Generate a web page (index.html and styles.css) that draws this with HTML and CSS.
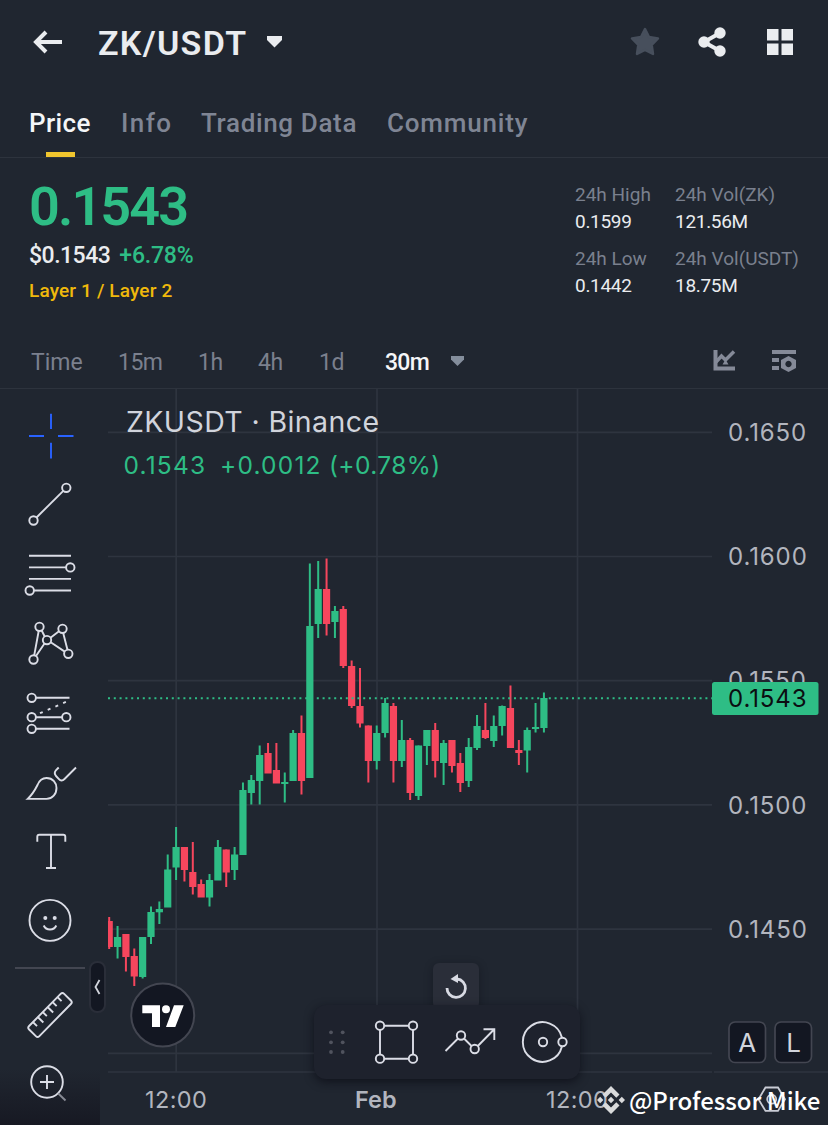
FILE: index.html
```html
<!DOCTYPE html>
<html lang="en">
<head>
  <meta charset="UTF-8">
  <title>ZK/USDT</title>
  <link rel="stylesheet" href="styles.css">
</head>
<body>
  <header class="header">
    <svg class="back" width="30" height="24" viewBox="0 0 30 24"><path d="M13 2 3 12l10 10M3 12h26" fill="none" stroke="#eaecef" stroke-width="4"/></svg>
    <h1>ZK/USDT</h1>
    <svg class="caret" width="16" height="12" viewBox="0 0 16 12"><path d="M0 0h15v4L7.500 11.500 0 4z" fill="#eaecef"/></svg>
    <div class="header-icons">
      <svg width="30" height="30" viewBox="0 0 30 30"><path d="m15 2 4 8 9 1.400-6.300 6.500 1.300 9.100-8-4-8 4 1.300-9.100L2 11.400l9-1.400z" fill="#474f5c" stroke="#474f5c" stroke-width="2.500" stroke-linejoin="round"/></svg>
      <svg class="share" width="30" height="30" viewBox="0 0 30 30" fill="#eaecef"><path d="M23 6 7 15l16 9" fill="none" stroke="#eaecef" stroke-width="4"/><circle cx="23" cy="6" r="5.700"/><circle cx="7" cy="15" r="5.700"/><circle cx="23" cy="24" r="5.700"/></svg>
      <svg width="26" height="26" viewBox="0 0 26 26" fill="#eaecef"><path d="M0 0h11.500v11.500H0zM14.500 0H26v11.500H14.500zM0 14.500h11.500V26H0zM14.500 14.500H26V26H14.500z"/></svg>
    </div>
  </header>

  <nav class="tabs">
    <span class="tab active">Price</span>
    <span class="tab info">Info</span>
    <span class="tab trading">Trading Data</span>
    <span class="tab community">Community</span>
  </nav>

  <section class="summary">
    <div class="price-box">
      <div class="price">0.1543</div>
      <div class="sub-price"><span class="usd">$0.1543</span><span class="change">+6.78%</span></div>
      <div class="layer">Layer 1 / Layer 2</div>
    </div>
    <div class="stats">
      <div class="stat"><label>24h High</label><b>0.1599</b></div>
      <div class="stat"><label>24h Vol(ZK)</label><b>121.56M</b></div>
      <div class="stat"><label>24h Low</label><b>0.1442</b></div>
      <div class="stat"><label>24h Vol(USDT)</label><b>18.75M</b></div>
    </div>
  </section>

  <div class="intervals">
    <span class="w-time">Time</span>
    <span class="w-15">15m</span>
    <span class="w-1h">1h</span>
    <span class="w-4h">4h</span>
    <span class="w-1d">1d</span>
    <span class="w-30 selected">30m</span>
    <svg class="interval-caret" width="14" height="10" viewBox="0 0 14 10"><path d="M0 0h13v3.500L6.500 10 0 3.500z" fill="#848e9c"/></svg>
    <div class="interval-icons">
      <svg width="24" height="24" viewBox="0 0 24 24" fill="none" stroke="#858a98" stroke-width="4"><path d="M3.500 1v18.500H23"/><path d="m4 13 5.500-6 4 4L22 2.500" stroke-width="3.500"/><path d="m13.500 10.500 3 5h-6z" fill="#858a98" stroke="none"/></svg>
      <svg width="26" height="24" viewBox="0 0 26 24" fill="#858a98"><path d="M1 1h24v4H1zM1 9h7v4H1zM1 17h7v4H1z"/><path fill-rule="evenodd" d="m17.500 7 7.500 4v8l-7.500 4-7.500-4v-8zm0 4.800a3.200 3.200 0 1 0 .01 0z"/></svg>
    </div>
  </div>

  <main class="chart">
    <aside class="tools">
      <svg class="tool cross" viewBox="-26 -26 52 52"><path d="M1-22.300V-7M1 6.700v15.700M-21 0h15M8 0h15.500"/></svg>
      <svg class="tool" viewBox="-26 -26 52 52"><path d="m-13.500 12.500 26.800-26.700"/><circle cx="-16.500" cy="15.500" r="4.200"/><circle cx="16.300" cy="-17.200" r="4.200"/></svg>
      <svg class="tool" viewBox="-26 -26 52 52"><path d="M-21-19.300h42M-21-7.600h37M-21 3.900h42M-16 15.500h37"/><circle cx="20.300" cy="-7.600" r="4.200"/><circle cx="-20.300" cy="15.500" r="4.200"/></svg>
      <svg class="tool" viewBox="-26 -26 52 52"><path d="m-11.300-13-4.500 24.300M-8.300-13.500l3 6M-5.500-.5-14 12M.5-6.300 9-12.800M13.200-11l4.200 16.600M.7-1.700l14 9.300"/><circle cx="-10.500" cy="-17.200" r="4.200"/><circle cx="12.500" cy="-15.200" r="4.200"/><circle cx="-3" cy="-3.900" r="4.200"/><circle cx="-16.500" cy="15.500" r="4.200"/><circle cx="18.300" cy="9.800" r="4.200"/></svg>
      <svg class="tool" viewBox="-26 -26 52 52"><path d="M-14-15.200h33.500M-14 4.200h26M-14 15.800h33.500"/><path d="M-10 .200 16.500-11.300" stroke-dasharray="3 5.400"/><circle cx="-18.300" cy="-15.200" r="4.200"/><circle cx="-18.300" cy="4.200" r="4.200"/><circle cx="16.300" cy="4.200" r="4.200"/><circle cx="-18.300" cy="15.800" r="4.200"/></svg>
      <svg class="tool" viewBox="-26 -26 52 52"><path d="M-22.300 15.900C-17 11-14.500 6-12.500 2-10.500-3-7-5-3.500-5 3-5 6.500 0 6.500 5c0 6-4 10.900-10 10.900zM8.700-15.500l-2.600 2.700Q3.500-10 6-7l2.700 2.800Q11.500-1 14.500-4L26-15.500"/></svg>
      <svg class="tool" viewBox="-26 -26 52 52"><path d="M-12.700-10.300v-5q0-2 2-2h24q2 0 2 2v5M1-17.300V16M-4 16H6"/></svg>
      <svg class="tool" viewBox="-26 -26 52 52"><circle cx="0" cy="-.6" r="20.500"/><g class="fill"><circle cx="-4.700" cy="-2.900" r="2"/><circle cx="4.700" cy="-2.900" r="2"/></g><path d="M-6.300 4.500Q-4.500 8.500 0 8.500t6.300-4"/></svg>
      <hr>
      <svg class="tool" viewBox="-26 -26 52 52"><g transform="rotate(-45.500)"><rect x="-25" y="-7.200" width="50" height="14.400" rx="2.500"/><path d="M-17-7v5.500M-10-7v7.500M-3-7v5.500M4-7v7.500M11-7v5.500M18-7v5.500"/></g></svg>
      <svg class="tool" viewBox="-26 -26 52 52"><circle cx="-3" cy="-3" r="15.800"/><path d="M-10-3H4M-3-10v14"/><path d="m8.300 8.500 7.200 7" stroke="#878a94"/></svg>
    </aside>

    <svg class="plot" width="728" height="736" viewBox="100 389 728 736">
      <g id="grid"></g>
      <path class="axis" d="M108 1072h604M714 1072h114"/>
      <g id="candles"></g>
      <path class="last-line" d="M108 698.200h604"/>
      <g id="scale" class="label"></g>
      <rect x="712" y="682" width="106.500" height="33" rx="2.500" fill="#2ebd85"/>
      <text class="label now" x="728" y="707">0.1543</text>
      <g class="label">
        <text x="145" y="1108" class="t">12:00</text>
        <text x="355" y="1108" class="t feb">Feb</text>
        <text x="546" y="1108" class="t">12:00</text>
      </g>
      <text class="symbol" x="126" y="432">ZKUSDT · Binance</text>
      <text class="quote" x="123.500" y="474">0.1543</text>
      <text class="quote" x="220" y="474">+0.0012</text>
      <text class="quote" x="329" y="474">(+0.78%)</text>

      <g class="tv">
        <circle cx="162.700" cy="1015" r="31.500" fill="#131722" stroke="#434651" stroke-width="2"/>
        <g fill="#fff"><path d="M142.300 1005.300H160V1027h-8v-13.700h-9.700zM174 1005.300h9.700l-8.400 21.700H166z"/><circle cx="166" cy="1009.300" r="4"/></g>
      </g>
      <g class="scale-button">
        <rect x="729" y="1022" width="36.500" height="40.500" rx="6"/>
        <rect x="775" y="1022" width="36.500" height="40.500" rx="6"/>
        <text x="747.200" y="1052">A</text>
        <text x="793.500" y="1052">L</text>
      </g>
      <g fill="none" stroke="#c9ccd5" stroke-width="1.800"><path d="M765.500 1087.500h12.500l7 11.700-7 11.700h-12.500l-7-11.700z"/><circle cx="771.700" cy="1099.200" r="4.500"/></g>
    </svg>

    <div class="collapse"><svg width="7" height="16" viewBox="0 0 7 16"><path d="M5.500 1 1.500 8l4 7" fill="none" stroke="#d1d4dc" stroke-width="1.800"/></svg></div>

    <div class="reset"><svg width="26" height="28" viewBox="-13 -15 26 28"><path d="M-9 0A9.200 9.200 0 1 0 1-9" fill="none" stroke="#d8dae3" stroke-width="2.800"/><path d="m-5.500-9 7.500-5v9z" fill="#d8dae3"/></svg></div>

    <div class="favorites">
      <svg width="266" height="74" viewBox="314 1005 266 74" fill="none" stroke="#dbdde6" stroke-width="1.900">
        <g fill="#50535e" stroke="none"><circle cx="331" cy="1032.300" r="1.900"/><circle cx="342.700" cy="1032.300" r="1.900"/><circle cx="331" cy="1042.300" r="1.900"/><circle cx="342.700" cy="1042.300" r="1.900"/><circle cx="331" cy="1052" r="1.900"/><circle cx="342.700" cy="1052" r="1.900"/></g>
        <path d="M384.300 1025.700h24.500M413 1030v24.500M408.800 1058.700h-24.500M380 1054.500V1030"/>
        <circle cx="380" cy="1025.700" r="4.200"/><circle cx="413" cy="1025.700" r="4.200"/><circle cx="413" cy="1058.700" r="4.200"/><circle cx="380" cy="1058.700" r="4.200"/>
        <path d="m445.500 1051 12.500-12.500M464 1038.500l7.500 7.500M477.800 1046l16.200-16.500M483.500 1029.300h10.800V1040"/>
        <circle cx="461" cy="1035.500" r="4.200"/><circle cx="474.700" cy="1049" r="4.200"/>
        <path d="M561.900 1037.500A19.800 19.800 0 1 0 561.900 1046.500"/><circle cx="543" cy="1042" r="4.200"/><circle cx="562.500" cy="1042" r="4.200"/>
      </svg>
    </div>

    <div class="author">
      <svg width="28" height="28" viewBox="-14 -14 28 28" fill="#d9dadb"><path d="m0-14 8.500 8.500-3.200 3.200L0-7.600l-5.300 5.300-3.200-3.200zM0 14l8.500-8.500-3.200-3.200L0 7.600l-5.300-5.300-3.200 3.200zM-14 0l3.200-3.200L-7.600 0l-3.200 3.200zM14 0l-3.200-3.200L7.600 0l3.200 3.200zM0-3.200 3.200 0 0 3.200-3.200 0z"/></svg>
      <span>@Professor Mike</span>
    </div>
  </main>

  <script>
    // [direction, wick top, wick bottom, body top, body bottom]
    const candles = [
      ['d', 917, 949, 921, 947], ['u', 926, 958.5, 937, 947], ['d', 934, 971.5, 934, 957],
      ['d', 948.5, 986, 956, 976.5], ['u', 937, 978.5, 937, 977], ['u', 906.5, 944, 912, 937],
      ['u', 901.5, 924, 909, 912.3], ['u', 854.5, 907, 869.5, 907.5], ['u', 827, 880, 847, 867.5],
      ['d', 847, 881.5, 847, 870], ['d', 842, 894.5, 872, 887], ['d', 879.5, 897, 884, 897.5],
      ['u', 874, 906.5, 880, 897.5], ['u', 840, 880, 847, 880.5], ['d', 849.5, 887, 849.5, 872.5],
      ['u', 847, 880, 854.5, 870], ['u', 782.5, 855, 790, 855], ['u', 775, 804.5, 780, 793],
      ['u', 745.5, 804.5, 755, 781], ['d', 743, 773, 753, 773.5], ['d', 743, 783, 770, 783.5],
      ['u', 772.5, 802.5, 782, 784], ['u', 730, 781, 733, 781], ['d', 715.5, 794.5, 733, 781],
      ['u', 563.5, 778, 626, 778], ['u', 561, 638, 589, 624], ['d', 558.5, 635.5, 589, 624],
      ['u', 606, 638, 611, 622], ['d', 606, 668, 609, 666], ['d', 660.5, 708, 666, 706],
      ['d', 668, 727.5, 706, 723.5], ['d', 725.5, 782.5, 725.5, 761], ['u', 725.5, 769.5, 733, 761],
      ['u', 698, 737.5, 703, 733], ['d', 703, 782.5, 706, 761], ['u', 720, 767, 740, 761],
      ['d', 738, 800, 740, 793], ['u', 745.5, 800, 745.5, 796], ['u', 730, 765, 730, 746],
      ['d', 723, 777.5, 730, 761], ['u', 740, 785, 743, 763], ['d', 740, 772.5, 740, 766],
      ['d', 753, 792, 763, 783], ['u', 738, 787, 747, 781], ['u', 715, 750, 726, 748],
      ['d', 703, 739, 730, 738], ['u', 715.5, 747, 726, 741], ['u', 705.5, 735.5, 706, 726],
      ['d', 685.5, 748, 708, 748], ['d', 740, 765, 750, 753], ['u', 727.5, 772.5, 730, 750.5],
      ['u', 703, 732.5, 727, 729], ['u', 692.5, 732.5, 698, 728]
    ];
    const colors = { u: '#2ebd85', d: '#f6465d' };

    let bars = '';
    candles.forEach(([dir, high, low, top, bottom], i) => {
      const x = 109.2 + i * 8.36;
      const left = Math.max(108, x - 3.6);
      bars += `<rect x="${x - 1}" y="${high}" width="2" height="${low - high}" fill="${colors[dir]}"/>`;
      bars += `<rect x="${left}" y="${top}" width="${x + 3.6 - left}" height="${bottom - top}" fill="${colors[dir]}"/>`;
    });
    document.getElementById('candles').innerHTML = bars;

    let grid = '<path d="M176.200 389v683M377 389v683M577.500 389v683"/>';
    let scale = '';
    ['0.1650', '0.1600', '0.1550', '0.1500', '0.1450', ''].forEach((price, i) => {
      const y = 432.3 + i * 124.2;
      grid += `<path d="M108 ${y}h604"/>`;
      scale += `<text x="728" y="${y + 8.7}">${price}</text>`;
    });
    document.getElementById('grid').innerHTML = grid;
    document.getElementById('scale').innerHTML = scale;
  </script>
</body>
</html>
```
FILE: styles.css
```css
* {
  margin: 0;
  padding: 0;
  box-sizing: border-box;
}

body {
  width: 828px;
  height: 1125px;
  overflow: hidden;
  font-family: Roboto, sans-serif;
  background-color: #202630;
  color: #eaecef;
}

.header {
  display: flex;
  align-items: center;
  height: 88px;
  padding: 0 35px 4px 33px;
}

h1 {
  width: 149px;
  margin: 2px 20px 0 35px;
  font-size: 34px;
  font-weight: 600;
  letter-spacing: 1.3px;
  white-space: nowrap;
}

.header-icons {
  display: flex;
  align-items: center;
  gap: 37px;
  margin-left: auto;
}

.share {
  margin-right: 3px;
}

.tabs {
  display: flex;
  height: 70px;
  padding-left: 29px;
  gap: 30px;
  border-bottom: 1px solid #2d333d;
  font-size: 26px;
  font-weight: 500;
  line-height: 70px;
  color: #7f8594;
  white-space: nowrap;
}

.tab.active {
  width: 62px;
  height: 69px;
  position: relative;
  letter-spacing: 0.4px;
  color: #f5f6f8;
}

.tab.active::after {
  content: "";
  position: absolute;
  left: 17px;
  bottom: 0;
  width: 29px;
  height: 5px;
  background-color: #f0c52e;
}

.info {
  width: 50px;
  letter-spacing: 1.4px;
}

.trading {
  width: 156px;
  letter-spacing: 0.65px;
}

.community {
  letter-spacing: 0.8px;
}

.summary {
  display: flex;
  justify-content: space-between;
  height: 177px;
  padding: 18px 29px 0;
}

.price {
  height: 60px;
  font-size: 54px;
  font-weight: 600;
  line-height: 61px;
  letter-spacing: -1.9px;
  color: #2ebd85;
}

.sub-price {
  display: flex;
  gap: 9px;
  height: 37px;
  font-size: 23px;
  font-weight: 500;
  line-height: 39px;
  letter-spacing: -0.5px;
}

.change {
  letter-spacing: -0.2px;
  color: #2ebd85;
}

.layer {
  font-size: 19px;
  font-weight: 500;
  line-height: 35px;
  letter-spacing: 0.15px;
  color: #f0b90b;
}

.stats {
  display: grid;
  grid-template-columns: 100px 124px;
  grid-auto-rows: 63.5px;
  padding-top: 5px;
}

.stat {
  display: flex;
  flex-direction: column;
  white-space: nowrap;
}

.stat label {
  font-size: 19px;
  line-height: 27px;
  color: #7a808e;
}

.stat b {
  font-size: 19px;
  font-weight: 400;
  line-height: 27px;
  letter-spacing: -0.3px;
}

.intervals {
  display: flex;
  align-items: center;
  height: 54px;
  padding: 2px 31px 0;
  border-bottom: 1px solid #2d333d;
  font-size: 23px;
  color: #7b808e;
}

.w-time { width: 87px; }
.w-15 { width: 80px; letter-spacing: -0.5px; }
.w-1h { width: 60px; letter-spacing: -0.5px; }
.w-4h { width: 61px; letter-spacing: -0.5px; }
.w-1d { width: 66px; letter-spacing: -0.5px; }
.w-30 { width: 66px; letter-spacing: -0.7px; }

.selected {
  font-weight: 500;
  color: #f5f6f8;
}

.interval-caret {
  margin-bottom: 4px;
}

.interval-icons {
  display: flex;
  gap: 35px;
  margin: 0 0 3px auto;
}

.chart {
  position: relative;
  display: flex;
  height: 736px;
}

.tools {
  display: flex;
  flex-direction: column;
  align-items: center;
  width: 100px;
  height: 736px;
  padding-top: 12.5px;
  background: linear-gradient(to bottom, transparent 680px, #171923 736px);
}

.tool {
  width: 52px;
  height: 52px;
  margin: 8.65px 0;
  flex: none;
  overflow: visible;
  fill: none;
  stroke: #dbdde6;
  stroke-width: 1.9;
}

.tool .fill {
  fill: #dbdde6;
  stroke: none;
}

.cross {
  stroke: #2962ff;
}

.tools hr {
  width: 70px;
  height: 2px;
  margin: 11.3px 0 11.8px;
  border: none;
  background-color: #434651;
}

.plot {
  flex: none;
  font-family: Inter, sans-serif;
}

#grid path, .axis {
  fill: none;
  stroke: #2e343f;
  stroke-width: 1.7;
}

.last-line {
  stroke: #2ebd85;
  stroke-width: 2;
  stroke-dasharray: 2 3.8;
}

.label {
  font-size: 24px;
  letter-spacing: 0.9px;
  fill: #b2b5be;
}

.now {
  fill: #0b0e11;
}

.t {
  font-size: 23.5px;
  letter-spacing: 0.4px;
}

.feb {
  font-weight: 600;
  letter-spacing: 0;
}

.symbol {
  font-size: 28.5px;
  letter-spacing: 0.4px;
  fill: #d1d4dc;
}

.quote {
  font-size: 24.5px;
  letter-spacing: 1.2px;
  fill: #2ebd85;
}

.quote:nth-of-type(5) {
  letter-spacing: 0.4px;
}

.scale-button rect {
  fill: #131722;
  stroke: #434651;
  stroke-width: 1.7;
}

.scale-button text {
  font-size: 26px;
  text-anchor: middle;
  fill: #d1d4dc;
}

.collapse {
  position: absolute;
  left: 89px;
  top: 572px;
  display: flex;
  align-items: center;
  justify-content: center;
  width: 17px;
  height: 52px;
  border: 2px solid #2a2e39;
  border-radius: 8px;
  background-color: #131722;
}

.reset {
  position: absolute;
  left: 433px;
  top: 574px;
  width: 46px;
  height: 46px;
  padding: 10px;
  border-radius: 6px;
  background-color: #2a2e39;
  box-shadow: 0 2px 8px rgba(10, 12, 20, 0.4);
}

.favorites {
  position: absolute;
  left: 314px;
  top: 616px;
  width: 266px;
  height: 74px;
  border-radius: 12px;
  background-color: #1e222d;
  box-shadow: 0 3px 10px rgba(10, 12, 20, 0.7);
}

.author {
  position: absolute;
  left: 597px;
  top: 692px;
  display: flex;
  align-items: center;
  gap: 4px;
  height: 38px;
  font: 500 24px "Noto Sans CJK SC", "Noto Sans", sans-serif;
  color: #fff;
  white-space: nowrap;
}

.author span {
  margin-top: -2px;
}
```
